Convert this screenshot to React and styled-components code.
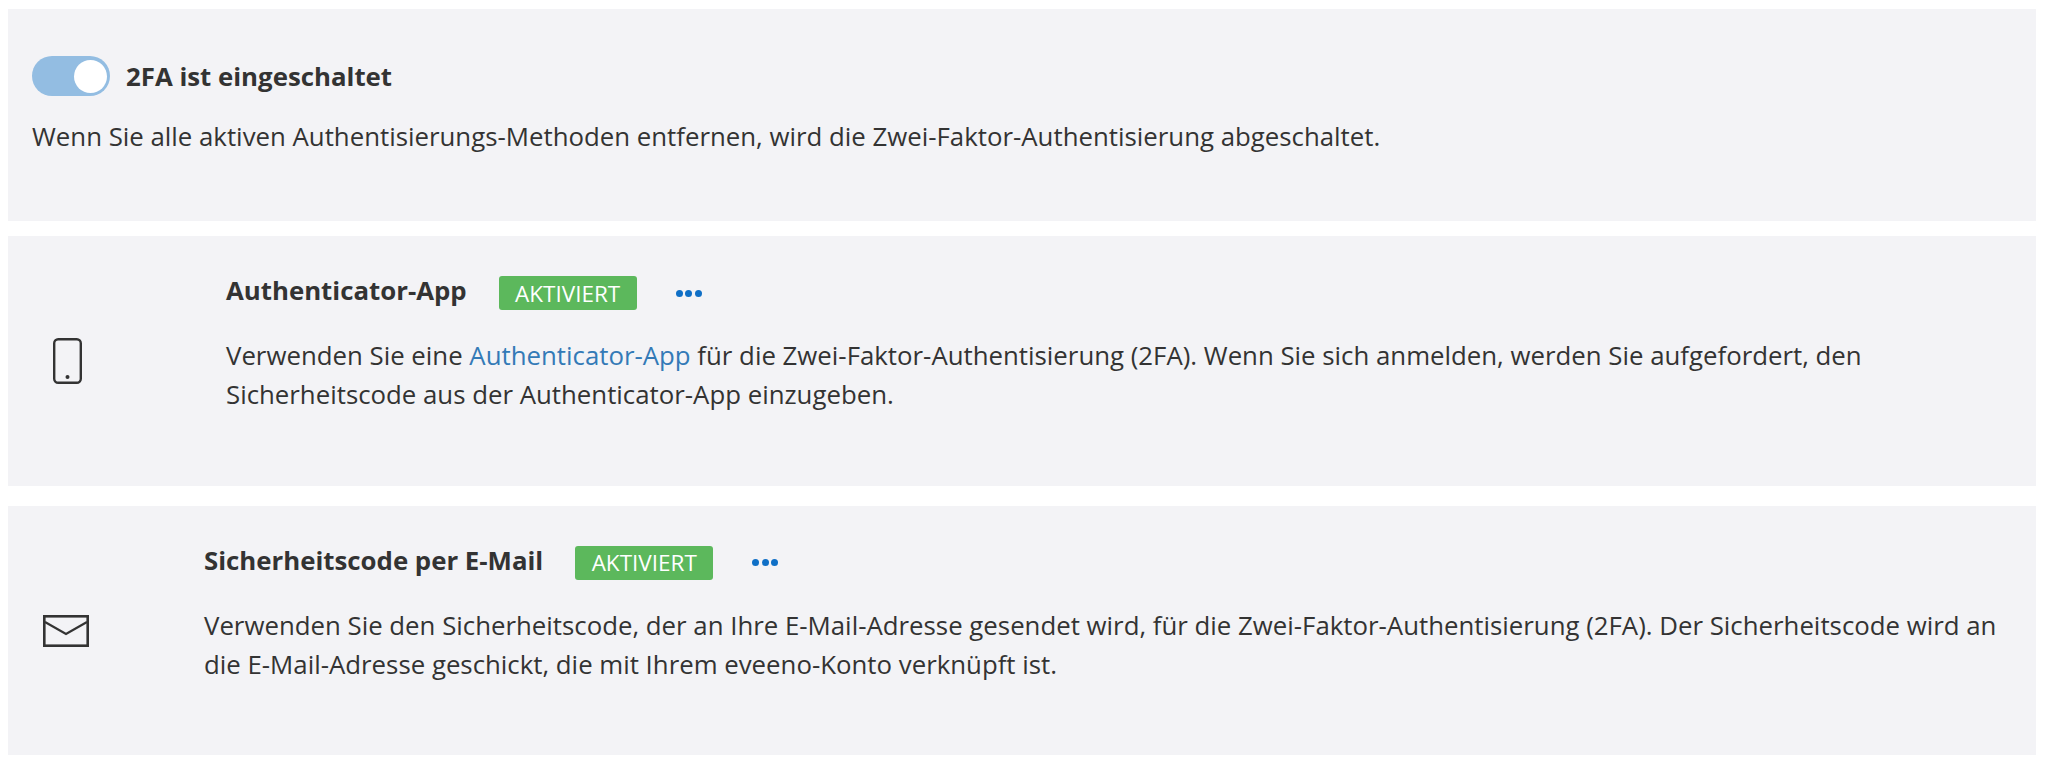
import React from "react";
import styled, { createGlobalStyle } from "styled-components";

const GlobalStyle = createGlobalStyle`
  * {
    box-sizing: border-box;
  }

  html, body, #root {
    margin: 0;
    padding: 0;
    background: #fff;
  }

  body {
    font-family: "Open Sans", sans-serif;
    color: #333;
  }
`;

const Page = styled.div`
  display: flex;
  flex-direction: column;
  padding: 9px 12px 10px 8px;
`;

const Panel = styled.section`
  background: #f3f3f6;
  height: ${(p) => p.$height}px;
  margin-bottom: ${(p) => p.$gap || 0}px;
  padding: ${(p) => p.$padding};
`;

const SwitchRow = styled.div`
  display: flex;
  align-items: center;
  gap: 16px;
  margin-bottom: 21px;
`;

const Switch = styled.div`
  display: flex;
  align-items: center;
  justify-content: flex-end;
  width: 78px;
  height: 40px;
  padding: 3px 3px 3px 0;
  border-radius: 20px;
  background: #93bde2;
`;

const Knob = styled.div`
  width: 33px;
  height: 33px;
  border-radius: 50%;
  background: #fff;
`;

const SwitchLabel = styled.strong`
  font-size: 25.8px;
  font-weight: 700;
`;

const Text = styled.p`
  margin: 0;
  font-size: 25.8px;
  line-height: 39px;
`;

const Method = styled.div`
  display: flex;
  align-items: center;
  height: 100%;
`;

const IconSlot = styled.div`
  flex: none;
  display: flex;
  width: ${(p) => p.$width}px;
  padding-left: ${(p) => p.$inset}px;
`;

const Body = styled.div`
  flex: 1;
  margin-top: ${(p) => p.$shift}px;
`;

const TitleRow = styled.div`
  display: flex;
  align-items: center;
  margin-bottom: 22px;
`;

const Title = styled.h3`
  margin: 0 32px 6px 0;
  font-size: 25.8px;
  font-weight: 700;
  line-height: 36px;
`;

const Badge = styled.span`
  display: inline-flex;
  align-items: center;
  justify-content: center;
  width: 138px;
  height: 34px;
  border-radius: 3px;
  background: #5cb85c;
  color: #fff;
  font-size: 22.5px;
`;

const Dots = styled.span`
  display: flex;
  gap: 2.5px;
  margin-left: 39px;
`;

const Dot = styled.i`
  width: 7px;
  height: 7px;
  border-radius: 50%;
  background: #0f6fc6;
`;

const TextLink = styled.a`
  color: #337ab7;
  text-decoration: none;
`;

const Glyph = styled.svg`
  display: block;
  fill: none;
  stroke: #333;
`;

const MoreDots = () => (
  <Dots>
    <Dot />
    <Dot />
    <Dot />
  </Dots>
);

export default function App() {
  return (
    <>
      <GlobalStyle />
      <Page>
        <Panel $height={212} $gap={15} $padding="47px 24px 0 24px">
          <SwitchRow>
            <Switch>
              <Knob />
            </Switch>
            <SwitchLabel>2FA ist eingeschaltet</SwitchLabel>
          </SwitchRow>
          <Text>
            Wenn Sie alle aktiven Authentisierungs-Methoden entfernen, wird die
            Zwei-Faktor-Authentisierung abgeschaltet.
          </Text>
        </Panel>
        <Panel $height={250} $gap={20} $padding="0 24px">
          <Method>
            <IconSlot $width={194} $inset={21}>
              <Glyph width="29" height="46" viewBox="0 0 29 46">
                <rect x="1.2" y="1.2" width="26.6" height="43.6" rx="4" strokeWidth="2.4" />
                <circle cx="14.5" cy="39" r="2" fill="#333" stroke="none" />
              </Glyph>
            </IconSlot>
            <Body $shift={-36}>
              <TitleRow>
                <Title>Authenticator-App</Title>
                <Badge>AKTIVIERT</Badge>
                <MoreDots />
              </TitleRow>
              <Text>
                Verwenden Sie eine <TextLink>Authenticator-App</TextLink> für die
                Zwei-Faktor-Authentisierung (2FA). Wenn Sie sich anmelden, werden
                Sie aufgefordert, den Sicherheitscode aus der Authenticator-App
                einzugeben.
              </Text>
            </Body>
          </Method>
        </Panel>
        <Panel $height={249} $padding="0 24px">
          <Method>
            <IconSlot $width={172} $inset={11}>
              <Glyph width="46" height="32" viewBox="0 0 46 32">
                <rect x="1.3" y="1.3" width="43.4" height="29.4" strokeWidth="2.6" />
                <path d="M2 7l21 12L44 7" strokeWidth="2.2" />
              </Glyph>
            </IconSlot>
            <Body $shift={-36}>
              <TitleRow>
                <Title>Sicherheitscode per E-Mail</Title>
                <Badge>AKTIVIERT</Badge>
                <MoreDots />
              </TitleRow>
              <Text>
                Verwenden Sie den Sicherheitscode, der an Ihre E-Mail-Adresse
                gesendet wird, für die Zwei-Faktor-Authentisierung (2FA). Der
                Sicherheitscode wird an die E-Mail-Adresse geschickt, die mit
                Ihrem eveeno-Konto verknüpft ist.
              </Text>
            </Body>
          </Method>
        </Panel>
      </Page>
    </>
  );
}
